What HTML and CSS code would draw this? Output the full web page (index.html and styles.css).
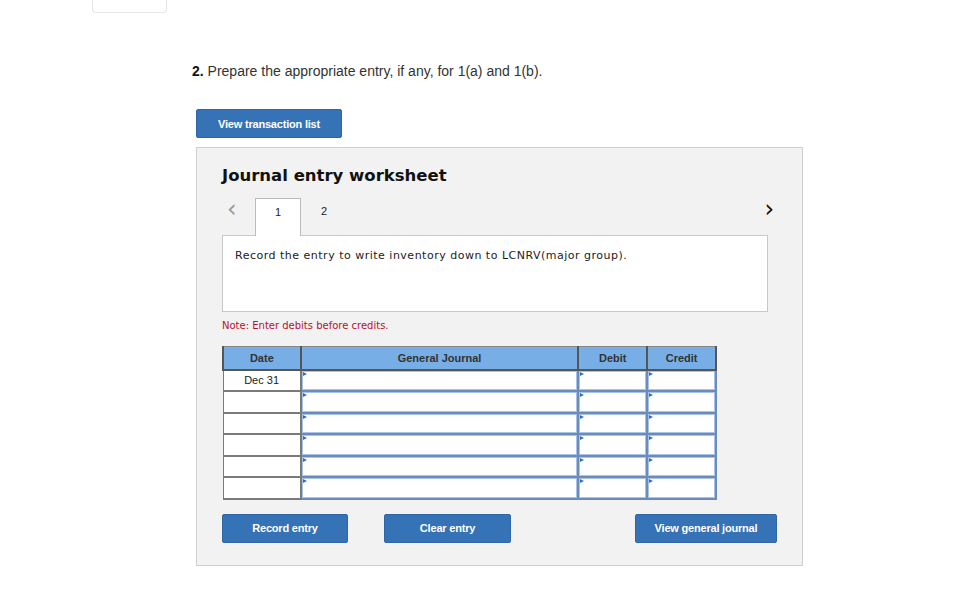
FILE: index.html
```
<!DOCTYPE html>
<html lang="en">
<head>
    <meta charset="UTF-8">
    <title>Journal entry worksheet</title>
    <link rel="stylesheet" href="styles.css">
</head>
<body>
    <div class="stub"></div>

    <p class="question"><b>2.</b> Prepare the appropriate entry, if any, for 1(a) and 1(b).</p>

    <div class="main">
        <button class="btn btn-list">View transaction list</button>

        <div class="panel">
            <h2>Journal entry worksheet</h2>

            <div class="tabs">
                <span class="arrow prev">&lsaquo;</span>
                <span class="tab active">1</span>
                <span class="tab">2</span>
                <span class="arrow next">&rsaquo;</span>
            </div>

            <div class="prompt">Record the entry to write inventory down to LCNRV(major group).</div>

            <p class="note">Note: Enter debits before credits.</p>

            <table class="journal">
                <thead>
                    <tr>
                        <th class="c-date">Date</th>
                        <th class="c-acct">General Journal</th>
                        <th class="c-amt">Debit</th>
                        <th class="c-amt">Credit</th>
                    </tr>
                </thead>
                <tbody>
                    <tr><td class="date">Dec 31</td><td class="in"></td><td class="in"></td><td class="in"></td></tr>
                    <tr><td class="date"></td><td class="in"></td><td class="in"></td><td class="in"></td></tr>
                    <tr><td class="date"></td><td class="in"></td><td class="in"></td><td class="in"></td></tr>
                    <tr><td class="date"></td><td class="in"></td><td class="in"></td><td class="in"></td></tr>
                    <tr><td class="date"></td><td class="in"></td><td class="in"></td><td class="in"></td></tr>
                    <tr><td class="date"></td><td class="in"></td><td class="in"></td><td class="in"></td></tr>
                </tbody>
            </table>

            <div class="actions">
                <button class="btn btn-record">Record entry</button>
                <button class="btn btn-clear">Clear entry</button>
                <button class="btn btn-view">View general journal</button>
            </div>
        </div>
    </div>
</body>
</html>
```

FILE: styles.css
```
* {
    margin: 0;
    padding: 0;
    box-sizing: border-box;
}
body {
    background: #fff;
    color: #222;
    font-family: "Liberation Sans", Arial, sans-serif;
    width: 978px;
    height: 602px;
    overflow: hidden;
}
.stub {
    margin-left: 92px;
    width: 75px;
    height: 13px;
    border: 1px solid #e6e6e6;
    border-top: none;
    border-radius: 0 0 4px 4px;
}
.question {
    margin: 50px 0 0 192px;
    font-size: 14px;
    line-height: 16px;
    color: #333;
}
.question b {
    color: #111;
}
.main {
    margin: 30px 0 0 196px;
}
.btn {
    background: #3572b6;
    color: #fff;
    border: 1px solid #2f67a6;
    border-radius: 2px;
    font-family: "Liberation Sans", Arial, sans-serif;
    font-weight: bold;
    font-size: 11px;
    letter-spacing: -0.2px;
    height: 29px;
    cursor: pointer;
}
.btn-list {
    width: 146px;
    height: 29px;
    display: block;
}
.panel {
    margin-top: 9px;
    width: 607px;
    height: 419px;
    background: #f2f2f2;
    border: 1px solid #cfcfcf;
    padding: 19px 0 0 25px;
}
.panel h2 {
    font-family: "DejaVu Sans", Verdana, sans-serif;
    font-size: 16.5px;
    line-height: 18px;
    font-weight: bold;
    color: #111;
}
.tabs {
    display: flex;
    align-items: flex-end;
    height: 38px;
    margin-top: 13px;
    width: 546px;
}
.arrow {
    align-self: flex-start;
    font-family: "DejaVu Sans", sans-serif;
    font-size: 24px;
    line-height: 22px;
}
.prev {
    color: #999;
    width: 33px;
    padding-left: 5px;
}
.next {
    color: #111;
    margin-left: auto;
    margin-right: -6px;
}
.tab {
    width: 46px;
    height: 38px;
    font-size: 11px;
    line-height: 26px;
    text-align: center;
    color: #222;
}
.tab.active {
    background: #fff;
    border: 1px solid #bbb;
    border-bottom: none;
    position: relative;
    z-index: 1;
}
.prompt {
    width: 546px;
    height: 77px;
    margin-top: -1px;
    background: #fff;
    border: 1px solid #c8c8c8;
    padding: 13px 12px;
    font-family: "DejaVu Sans", Verdana, sans-serif;
    font-size: 11px;
    letter-spacing: 0.5px;
    color: #222;
}
.note {
    margin-top: 7px;
    font-family: "DejaVu Sans", Verdana, sans-serif;
    font-size: 10px;
    line-height: 13px;
    color: #b8102c;
}
.journal {
    margin-top: 14px;
    border-collapse: collapse;
    font-size: 11px;
    width: 495px;
}
.journal th {
    background: #78aee6;
    height: 23px;
    border: 2px solid #555;
    border-top: 1px solid #888;
    font-weight: bold;
    color: #333;
}
.c-date { width: 78px; }
.c-acct { width: 279px; }
.c-amt { width: 69px; }
.journal td {
    height: 21.5px;
    background: #fff;
}
.journal td.date {
    border: 2px solid #7a7a7a;
    border-left-width: 1px;
    text-align: center;
    color: #222;
}
.journal td.in {
    position: relative;
    border: 2px solid #6b8cba;
    box-shadow: inset 0 0 0 1px #a9c4e8;
}
.journal td.in::before {
    content: "";
    position: absolute;
    top: 1px;
    left: 1px;
    border-left: 4px solid #2f6fc0;
    border-top: 2px solid transparent;
    border-bottom: 2px solid transparent;
}
.actions {
    display: flex;
    margin-top: 14px;
    width: 555px;
}
.btn-record {
    width: 126px;
}
.btn-clear {
    width: 127px;
    margin-left: 36px;
}
.btn-view {
    width: 142px;
    margin-left: auto;
}
```
